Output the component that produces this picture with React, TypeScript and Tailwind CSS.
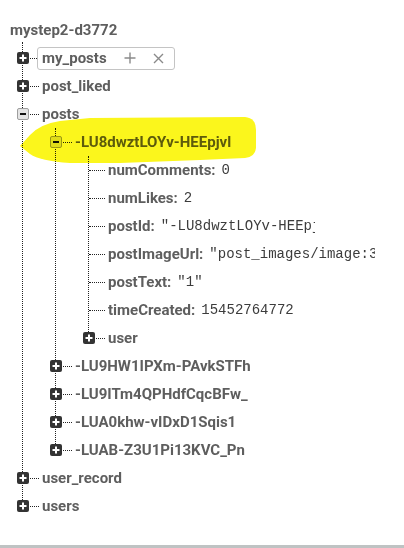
import React from "react";

type TreeNode = {
  k: string;
  v?: string;
  vw?: string;
  open?: boolean;
  edit?: boolean;
  children?: TreeNode[];
};

const tree: TreeNode[] = [
  { k: "my_posts", edit: true },
  { k: "post_liked" },
  {
    k: "posts",
    open: true,
    children: [
      {
        k: "-LU8dwztLOYv-HEEpjvl",
        open: true,
        children: [
          { k: "numComments:", v: "0" },
          { k: "numLikes:", v: "2" },
          { k: "postId:", v: '"-LU8dwztLOYv-HEEpjvl"', vw: "w-[154px]" },
          { k: "postImageUrl:", v: '"post_images/image:3', vw: "w-[166px]" },
          { k: "postText:", v: '"1"' },
          { k: "timeCreated:", v: "15452764772" },
          { k: "user" },
        ],
      },
      { k: "-LU9HW1IPXm-PAvkSTFh" },
      { k: "-LU9ITm4QPHdfCqcBFw_" },
      { k: "-LUA0khw-vIDxD1Sqis1" },
      { k: "-LUAB-Z3U1Pi13KVC_Pn" },
    ],
  },
  { k: "user_record" },
  { k: "users" },
];

const KEY = "font-['Roboto',sans-serif] font-bold text-[15px] leading-5 text-[#5e5e5e] whitespace-nowrap";
const VAL = "font-['Liberation_Mono','DejaVu_Sans_Mono',monospace] text-[14px] leading-5 text-[#3c3c3c] whitespace-nowrap overflow-hidden";

function Toggle({ open }: { open?: boolean }) {
  if (open) {
    return (
      <svg width="12" height="12" viewBox="0 0 12 12" className="shrink-0">
        <rect x="0.5" y="0.5" width="11" height="11" rx="1.5" fill="#e4e4e4" stroke="#9e9e9e" />
        <path d="M3 6h6" stroke="#111" strokeWidth="2" />
      </svg>
    );
  }
  return (
    <svg width="12" height="12" viewBox="0 0 12 12" className="shrink-0">
      <rect width="12" height="12" rx="2" fill="#333333" />
      <path d="M2.5 6h7M6 2.5v7" stroke="#ffffff" strokeWidth="2" />
    </svg>
  );
}

function Row({ n }: { n: TreeNode }) {
  const isLeaf = n.v !== undefined;
  return (
    <div>
      <div className="flex h-7 items-center">
        {isLeaf ? (
          <>
            <div className="ml-[6px] w-[16px] border-t border-dotted border-[#222]" />
            <span className={`ml-[3px] ${KEY}`}>{n.k}</span>
            <span className={`ml-[6px] ${VAL} ${n.vw ?? ""}`}>{n.v}</span>
          </>
        ) : (
          <>
            <Toggle open={n.open} />
            {n.edit ? (
              <>
                <div className="ml-[1px] w-[7px] border-t border-dotted border-[#222]" />
                <div className="flex h-[23px] w-[138px] items-center rounded-[3px] border border-[#c4c4c4] pl-[4px]">
                  <span className={KEY}>{n.k}</span>
                  <svg width="12" height="12" viewBox="0 0 12 12" className="ml-[17px]">
                    <path d="M6 0.5v11M0.5 6h11" stroke="#8a8a8a" strokeWidth="1.4" />
                  </svg>
                  <svg width="11" height="11" viewBox="0 0 11 11" className="ml-[17px]">
                    <path d="M1 1l9 9M10 1l-9 9" stroke="#8a8a8a" strokeWidth="1.4" />
                  </svg>
                </div>
              </>
            ) : (
              <>
                <div className="ml-[1px] w-[9px] border-t border-dotted border-[#222]" />
                <span className={`ml-[3px] ${KEY}`}>{n.k}</span>
              </>
            )}
          </>
        )}
      </div>
      {n.open && n.children && <List nodes={n.children} />}
    </div>
  );
}

function List({ nodes }: { nodes: TreeNode[] }) {
  return (
    <div className="relative ml-[33px]">
      <div className="absolute left-[5px] top-0 bottom-[14px] border-l border-dotted border-[#222]" />
      <div className="relative">
        {nodes.map((n) => (
          <Row key={n.k} n={n} />
        ))}
      </div>
    </div>
  );
}

export default function App() {
  return (
    <div className="relative flex h-[548px] w-[404px] flex-col overflow-hidden bg-white">
      <div className="pl-[10px] pt-[20px]">
        <div className={KEY}>mystep2-d3772</div>
      </div>
      <div className="mt-[4px] pl-[17px]">
        <div className="relative">
          <div className="absolute left-[5px] -top-[2px] bottom-[14px] border-l border-dotted border-[#222]" />
          <div className="relative">
            {tree.map((n) => (
              <Row key={n.k} n={n} />
            ))}
          </div>
        </div>
      </div>
      <div className="mt-auto h-[3px] bg-[#bfc3c3]" />
      <svg
        className="pointer-events-none absolute left-0 top-0 mix-blend-multiply"
        width="404"
        height="548"
        viewBox="0 0 404 548"
      >
        <path
          d="M20 146 L30 135 Q40 124 60 121 L90 118 L245 117 Q256 118 256 130 L256 148 Q255 157 245 158 L200 160 L120 163 L70 163 Q40 161 30 154 Z"
          fill="#fbf61c"
        />
      </svg>
    </div>
  );
}
